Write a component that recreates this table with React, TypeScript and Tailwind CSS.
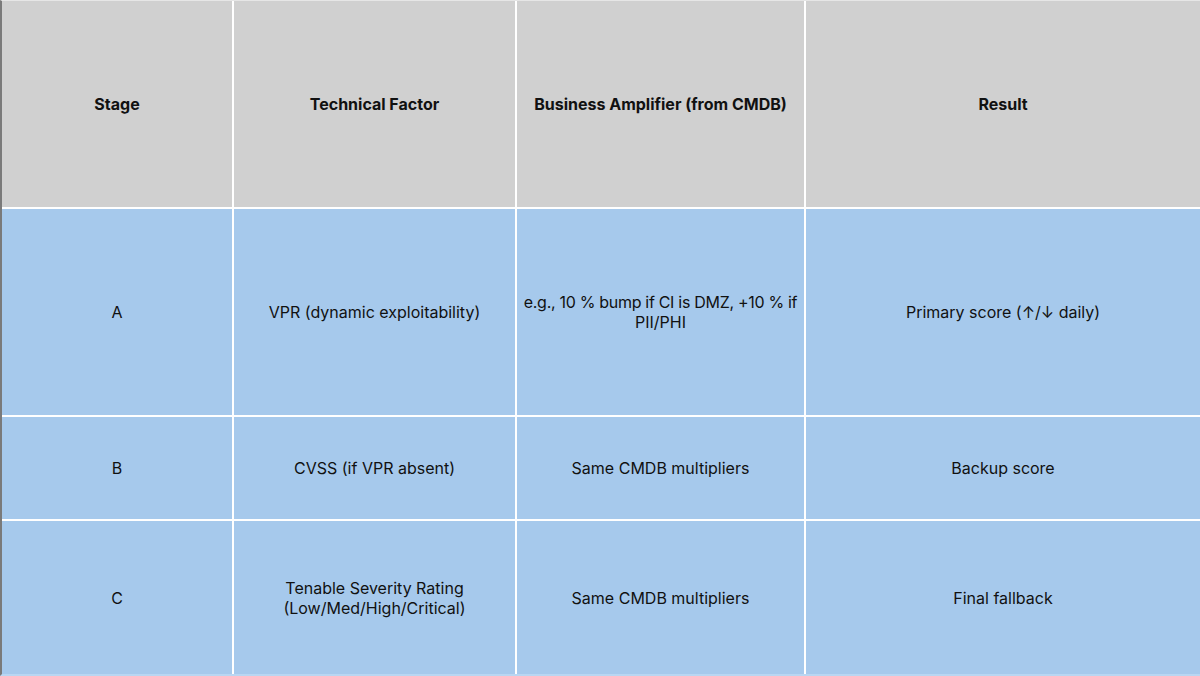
import React from 'react';

const rows = [
  {
    stage: 'A',
    factor: 'VPR (dynamic exploitability)',
    amplifier: (
      <>
        <span className="whitespace-nowrap tracking-[-0.3px]">e.g., 10 % bump if CI is DMZ, +10 % if</span>
        <br />
        PII/PHI
      </>
    ),
    result: 'Primary score (↑/↓ daily)',
  },
  {
    stage: 'B',
    factor: 'CVSS (if VPR absent)',
    amplifier: 'Same CMDB multipliers',
    result: 'Backup score',
  },
  {
    stage: 'C',
    factor: 'Tenable Severity Rating (Low/Med/High/Critical)',
    amplifier: 'Same CMDB multipliers',
    result: 'Final fallback',
  },
];

const headers = ['Stage', 'Technical Factor', 'Business Amplifier (from CMDB)', 'Result'];

const App = () => {
  return (
    <div
      className="w-[1200px] h-[676px] bg-[#f4f4f4] border-l-2 border-l-[#7a7a7a] border-t border-t-[#e6e6e6] border-b-2 border-b-[#b9d6f2] overflow-hidden"
      style={{ fontFamily: 'Inter, "Noto Sans", sans-serif' }}
    >
      <div className="grid h-full grid-cols-[230px_281px_287px_1fr] grid-rows-[206px_206px_102px_1fr] gap-[2px] bg-white text-[16px] text-[#111111]">
        {headers.map((h) => (
          <div
            key={h}
            className="flex items-center justify-center bg-[#d0d0d0] px-1 text-center font-bold leading-[20px]"
          >
            {h}
          </div>
        ))}
        {rows.map((r) =>
          [r.stage, r.factor, r.amplifier, r.result].map((v, i) => (
            <div
              key={r.stage + i}
              className="flex items-center justify-center bg-[#a6c9ec] px-[1px] text-center leading-[20px]"
            >
              <span className={i === 1 ? 'max-w-[215px]' : ''}>{v}</span>
            </div>
          ))
        )}
      </div>
    </div>
  );
};

export default App;
